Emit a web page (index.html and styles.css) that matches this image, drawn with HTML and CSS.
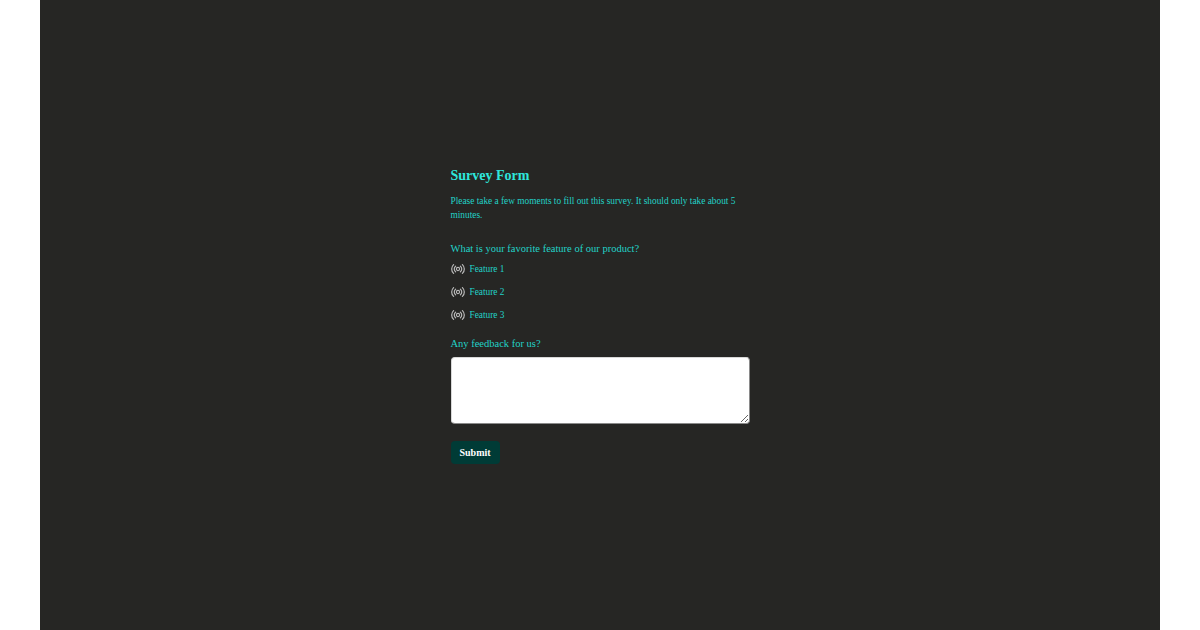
FILE: index.html
```html
<!DOCTYPE html>
<html lang="en">
<head>
<meta charset="utf-8">
<title>Survey Form</title>
<link rel="stylesheet" href="styles.css">
</head>
<body>
<main class="page">
  <form class="survey">
    <h1 class="survey-title">Survey Form</h1>
    <p class="survey-intro">Please take a few moments to fill out this survey. It should only take about 5 minutes.</p>

    <div class="question" role="radiogroup">
      <span class="question-label">What is your favorite feature of our product?</span>
      <label class="option">
        <svg class="option-icon" viewBox="0 0 14 10" aria-hidden="true"><circle cx="7" cy="5" r="1.6"/><path d="M4.6 2.2a3.6 3.6 0 0 0 0 5.6M9.4 2.2a3.6 3.6 0 0 1 0 5.6M2.6 0.6a6 6 0 0 0 0 8.8M11.4 0.6a6 6 0 0 1 0 8.8"/></svg>
        <span>Feature 1</span>
      </label>
      <label class="option">
        <svg class="option-icon" viewBox="0 0 14 10" aria-hidden="true"><circle cx="7" cy="5" r="1.6"/><path d="M4.6 2.2a3.6 3.6 0 0 0 0 5.6M9.4 2.2a3.6 3.6 0 0 1 0 5.6M2.6 0.6a6 6 0 0 0 0 8.8M11.4 0.6a6 6 0 0 1 0 8.8"/></svg>
        <span>Feature 2</span>
      </label>
      <label class="option">
        <svg class="option-icon" viewBox="0 0 14 10" aria-hidden="true"><circle cx="7" cy="5" r="1.6"/><path d="M4.6 2.2a3.6 3.6 0 0 0 0 5.6M9.4 2.2a3.6 3.6 0 0 1 0 5.6M2.6 0.6a6 6 0 0 0 0 8.8M11.4 0.6a6 6 0 0 1 0 8.8"/></svg>
        <span>Feature 3</span>
      </label>
    </div>

    <label class="feedback">
      <span class="question-label">Any feedback for us?</span>
      <textarea class="feedback-box"></textarea>
    </label>

    <button type="submit" class="submit">Submit</button>
  </form>
</main>
</body>
</html>
```

FILE: styles.css
```css
html, body {
  margin: 0;
  height: 100%;
  background: #ffffff;
}

body {
  font-family: "Liberation Serif", "Times New Roman", serif;
}

.page {
  width: 1120px;
  height: 100%;
  margin: 0 auto;
  background: #262624;
  display: flex;
  align-items: center;
  justify-content: center;
}

.survey {
  width: 299px;
  display: flex;
  flex-direction: column;
}

.survey-title {
  margin: 0;
  font-size: 14px;
  line-height: 18px;
  font-weight: bold;
  color: #2ee6dc;
}

.survey-intro {
  margin: 9px 0 0;
  font-size: 9.33px;
  line-height: 14px;
  color: #22d2c8;
}

.question {
  margin-top: 20px;
  display: flex;
  flex-direction: column;
}

.question-label {
  display: block;
  font-size: 10.5px;
  line-height: 14px;
  color: #22d2c8;
}

.option {
  display: flex;
  align-items: center;
  gap: 5px;
  height: 14px;
  margin-top: 9px;
  font-size: 9.33px;
  color: #22d2c8;
}

.question-label + .option {
  margin-top: 6px;
}

.option-icon {
  width: 14px;
  height: 10px;
  fill: none;
  stroke: #b8b8b8;
  stroke-width: 1.2;
  stroke-linecap: round;
}

.option-icon circle {
  stroke-width: 1.1;
}

.feedback {
  margin-top: 15px;
  display: flex;
  flex-direction: column;
  gap: 6px;
}

.feedback-box {
  box-sizing: border-box;
  width: 299px;
  height: 67px;
  border: 1px solid #8a8a8a;
  border-top-color: #d8d8d8;
  border-left-color: #d8d8d8;
  border-radius: 4px;
  background: #ffffff;
  margin: 0;
}

.submit {
  align-self: flex-start;
  margin-top: 17px;
  height: 23px;
  padding: 0 9px;
  border: 0;
  border-radius: 4px;
  background: #003b36;
  color: #ffffff;
  font-family: "Liberation Serif", "Times New Roman", serif;
  font-weight: bold;
  font-size: 10px;
}
```
